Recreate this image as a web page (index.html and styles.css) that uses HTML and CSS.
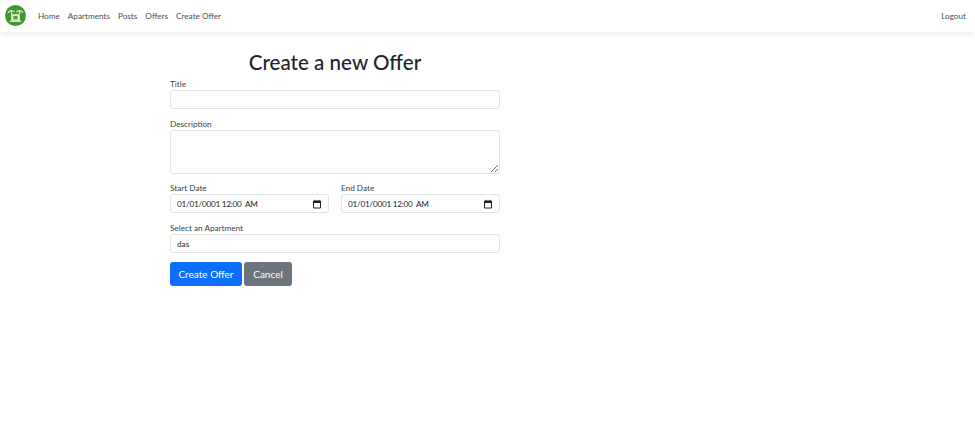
FILE: index.html
```html
<!DOCTYPE html>
<html lang="en">
<head>
<meta charset="utf-8">
<title>Create a new Offer</title>
<link rel="stylesheet" href="styles.css">
</head>
<body>
<nav class="navbar">
  <svg class="logo" viewBox="0 0 24 24" aria-hidden="true">
    <circle cx="12" cy="12" r="12" fill="#3f9a2e"/>
    <path d="M3.5 9 Q7 4.5 11 8 M13 8 Q17 4.5 20.5 9" fill="none" stroke="#d5e8cf" stroke-width="1.6"/>
    <path d="M7.5 7v4M16.5 7v4" stroke="#d5e8cf" stroke-width="1.2"/>
    <path d="M7 10.5h10v7.5H7z" fill="#dfeeda"/>
    <path d="M9.5 12.5h5v4h-5z" fill="#4ea63c"/>
    <path d="M5.5 18.5h13" stroke="#eef5eb" stroke-width="1.4"/>
  </svg>
  <a href="#" class="nav-link">Home</a>
  <a href="#" class="nav-link">Apartments</a>
  <a href="#" class="nav-link">Posts</a>
  <a href="#" class="nav-link">Offers</a>
  <a href="#" class="nav-link">Create Offer</a>
  <a href="#" class="nav-link logout">Logout</a>
</nav>
<main class="container">
  <h1 class="title">Create a new Offer</h1>
  <form class="form">
    <div class="group">
      <label class="label" for="t">Title</label>
      <input class="control" id="t" type="text">
    </div>
    <div class="group">
      <label class="label" for="d">Description</label>
      <textarea class="control area" id="d"></textarea>
    </div>
    <div class="row">
      <div class="group">
        <label class="label" for="s">Start Date</label>
        <div class="date">
          <input class="date-input" id="s" type="text" value="01/01/0001 12:00  AM">
          <svg class="cal" viewBox="0 0 10 10" aria-hidden="true"><path d="M1.5 2h7v7h-7z" fill="none" stroke="#222" stroke-width="1"/><path d="M1 2h8v2H1z" fill="#222"/><path d="M3 .8v1.5M7 .8v1.5" stroke="#222"/></svg>
        </div>
      </div>
      <div class="group">
        <label class="label" for="e">End Date</label>
        <div class="date">
          <input class="date-input" id="e" type="text" value="01/01/0001 12:00  AM">
          <svg class="cal" viewBox="0 0 10 10" aria-hidden="true"><path d="M1.5 2h7v7h-7z" fill="none" stroke="#222" stroke-width="1"/><path d="M1 2h8v2H1z" fill="#222"/><path d="M3 .8v1.5M7 .8v1.5" stroke="#222"/></svg>
        </div>
      </div>
    </div>
    <div class="group">
      <label class="label" for="a">Select an Apartment</label>
      <input class="control" id="a" type="text" value="das">
    </div>
    <div class="actions">
      <button type="button" class="btn primary">Create Offer</button>
      <button type="button" class="btn secondary">Cancel</button>
    </div>
  </form>
</main>
</body>
</html>
```
FILE: styles.css
```css
* { box-sizing: border-box; }
html, body { margin: 0; padding: 0; }
body {
  height: 442px;
  overflow: hidden;
  background: #fff;
  color: #212529;
  font-family: Lato, Roboto, sans-serif;
  font-size: 8.2px;
}
.navbar {
  display: flex;
  align-items: center;
  height: 32px;
  padding: 0 9px 1px 5px;
  background: #fff;
  box-shadow: 0 2px 6px rgba(0, 0, 0, 0.09);
}
.logo { width: 21px; height: 21px; margin-right: 12px; }
.nav-link {
  margin-right: 8px;
  color: #4a4f55;
  text-decoration: none;
  font-size: 8.2px;
}
.logout { margin-left: auto; margin-right: 0; }
.container { width: 330px; margin-left: 170px; }
.title {
  margin: 16px 0 1px;
  text-align: center;
  font-size: 20.6px;
  line-height: 29px;
  font-weight: 500;
  color: #212529;
}
.form { display: flex; flex-direction: column; }
.group { display: flex; flex-direction: column; margin-bottom: 9px; }
.label { height: 12px; line-height: 13px; color: #3c4146; font-size: 8.2px; }
.control, .date {
  width: 100%;
  height: 19px;
  padding: 0 6px;
  border: 1px solid #e0e3e6;
  border-radius: 3px;
  background: #fff;
  color: #212529;
  font: inherit;
  outline: none;
}
.area { height: 44px; display: block; resize: vertical; }
.row { display: grid; grid-template-columns: 159px 159px; column-gap: 12px; margin-top: -1px; }
.date { display: flex; align-items: center; }
.date-input {
  flex: 1;
  min-width: 0;
  border: 0;
  padding: 0;
  color: #212529;
  font: inherit;
  letter-spacing: -0.25px;
  outline: none;
  white-space: pre;
}
.cal { width: 10px; height: 10px; }
.actions { display: flex; gap: 2px; }
.btn {
  height: 24px;
  padding: 0;
  border: 1px solid transparent;
  border-radius: 3px;
  color: #fff;
  font-family: inherit;
  font-size: 10px;
  white-space: nowrap;
}
.primary { background: #0d6efd; width: 72px; }
.secondary { background: #6c757d; width: 48px; }
```
